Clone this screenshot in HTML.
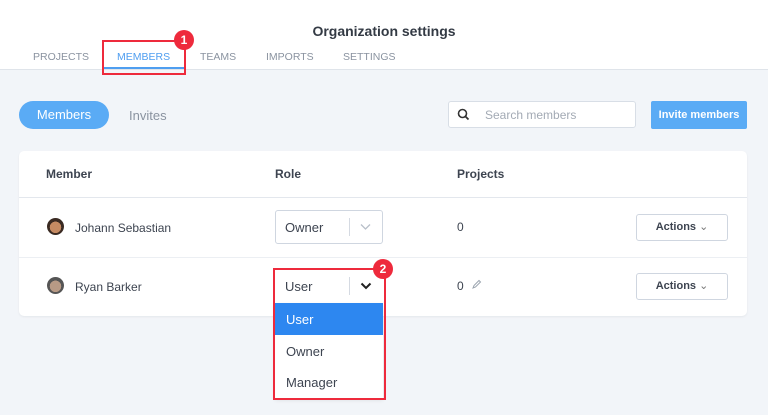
<!DOCTYPE html><html><head><style>
*{box-sizing:border-box;margin:0;padding:0}
body{width:768px;height:415px;overflow:hidden;background:#f2f5f9;font-family:"Liberation Sans",sans-serif;position:relative;color:#3d4450}
.a{position:absolute}
.hdr{left:0;top:0;width:768px;height:70px;background:#fff;border-bottom:1px solid #dfe4ea}
.tab{top:51px;font-size:10.5px;color:#8a93a0}
.badge{width:20px;height:20px;border-radius:50%;background:#ee2a3c;color:#fff;font-size:12px;font-weight:bold;text-align:center;line-height:20px}
.card{left:19px;top:151px;width:728px;height:165px;background:#fff;border-radius:5px;box-shadow:0 1px 2px rgba(0,0,0,.06)}
.th{top:167px;font-size:12px;font-weight:bold;color:#3d4450}
.txt{font-size:12px;color:#3d4450}
.act{width:92px;height:27px;border:1px solid #cfd6e0;border-radius:3px;background:#fff;font-size:11px;font-weight:bold;color:#3d4450;text-align:center;line-height:25px}
.av{width:17px;height:17px;border-radius:50%}
</style></head><body>
<div class="a hdr"></div>
<div class="a" style="left:0;width:768px;top:23px;text-align:center;font-size:14px;font-weight:bold;color:#333a44"><span style="position:relative;left:0px">Organization settings</span></div>
<div class="a tab" style="left:33px">PROJECTS</div>
<div class="a tab" style="left:117px;color:#4f9ef0">MEMBERS</div>
<div class="a tab" style="left:200px">TEAMS</div>
<div class="a tab" style="left:266px">IMPORTS</div>
<div class="a tab" style="left:343px">SETTINGS</div>
<div class="a" style="left:103px;top:67px;width:82px;height:2px;background:#4f9ef0"></div>
<div class="a" style="left:102px;top:40px;width:84px;height:35px;border:2px solid #ee2a3c"></div>
<div class="a badge" style="left:174px;top:30px">1</div>

<div class="a" style="left:19px;top:101px;width:90px;height:28px;border-radius:14px;background:#5aabf5;color:#fff;font-size:13px;text-align:center;line-height:28px">Members</div>
<div class="a" style="left:129px;top:108px;font-size:13px;color:#8a93a0">Invites</div>
<div class="a" style="left:448px;top:101px;width:188px;height:27px;background:#fff;border:1px solid #d8dee6;border-radius:3px"></div>
<svg class="a" style="left:457px;top:108px" width="13" height="13" viewBox="0 0 13 13"><circle cx="5.5" cy="5.5" r="4" fill="none" stroke="#333" stroke-width="1.6"/><path d="M8.5 8.5L11.5 11.5" stroke="#333" stroke-width="1.8"/></svg>
<div class="a" style="left:485px;top:108px;font-size:12px;color:#a3aab4">Search members</div>
<div class="a" style="left:651px;top:101px;width:96px;height:28px;background:#5aabf5;border-radius:2px;color:#fff;font-size:11px;font-weight:bold;text-align:center;line-height:28px">Invite members</div>

<div class="a card"></div>
<div class="a" style="left:19px;top:197px;width:728px;height:1px;background:#e3e7ed"></div>
<div class="a" style="left:19px;top:257px;width:728px;height:1px;background:#eceff3"></div>
<div class="a th" style="left:46px">Member</div>
<div class="a th" style="left:275px">Role</div>
<div class="a th" style="left:457px">Projects</div>

<div class="a av" style="left:47px;top:218px;background:radial-gradient(circle at 50% 55%,#c58a62 0 45%,#3a2a22 46%)"></div>
<div class="a txt" style="left:75px;top:221px">Johann Sebastian</div>
<div class="a" style="left:275px;top:210px;width:108px;height:34px;border:1px solid #cfd6e0;border-radius:3px;background:#fff"></div>
<div class="a txt" style="left:285px;top:220px;font-size:13px">Owner</div>
<div class="a" style="left:349px;top:218px;width:1px;height:18px;background:#d5dae2"></div>
<svg class="a" style="left:360px;top:223px" width="11" height="8"><path d="M1 1.5L5.5 6L10 1.5" fill="none" stroke="#b8bfc9" stroke-width="1.3"/></svg>
<div class="a txt" style="left:457px;top:220px">0</div>
<div class="a act" style="left:636px;top:214px">Actions <span style="font-weight:normal;color:#777">&#8964;</span></div>

<div class="a av" style="left:47px;top:277px;background:radial-gradient(circle at 50% 55%,#b89a85 0 45%,#555 46%)"></div>
<div class="a txt" style="left:75px;top:280px">Ryan Barker</div>
<div class="a" style="left:275px;top:265px;width:108px;height:37px;background:#fff"></div>
<div class="a txt" style="left:285px;top:279px;font-size:13px">User</div>
<div class="a" style="left:349px;top:277px;width:1px;height:18px;background:#d5dae2"></div>
<svg class="a" style="left:360px;top:282px" width="12" height="8"><path d="M1.5 1.5L6 6L10.5 1.5" fill="none" stroke="#222" stroke-width="2"/></svg>
<div class="a" style="left:275px;top:303px;width:108px;height:95px;background:#fff;box-shadow:0 2px 4px rgba(0,0,0,.1)"></div>
<div class="a" style="left:275px;top:303px;width:108px;height:32px;background:#2d87f0"></div>
<div class="a" style="left:286px;top:312px;font-size:13px;color:#fff">User</div>
<div class="a" style="left:286px;top:344px;font-size:13px;color:#3d4450">Owner</div>
<div class="a" style="left:286px;top:375px;font-size:13px;color:#3d4450">Manager</div>
<div class="a" style="left:273px;top:268px;width:113px;height:132px;border:2px solid #ee2a3c"></div>
<div class="a badge" style="left:373px;top:259px">2</div>
<div class="a txt" style="left:457px;top:279px">0</div>
<svg class="a" style="left:471px;top:279px" width="11" height="11"><path d="M2 9L3 6.5L8 1.5L9.5 3L4.5 8Z" fill="none" stroke="#9aa3ae" stroke-width="1"/></svg>
<div class="a act" style="left:636px;top:273px">Actions <span style="font-weight:normal;color:#777">&#8964;</span></div>
</body></html>
